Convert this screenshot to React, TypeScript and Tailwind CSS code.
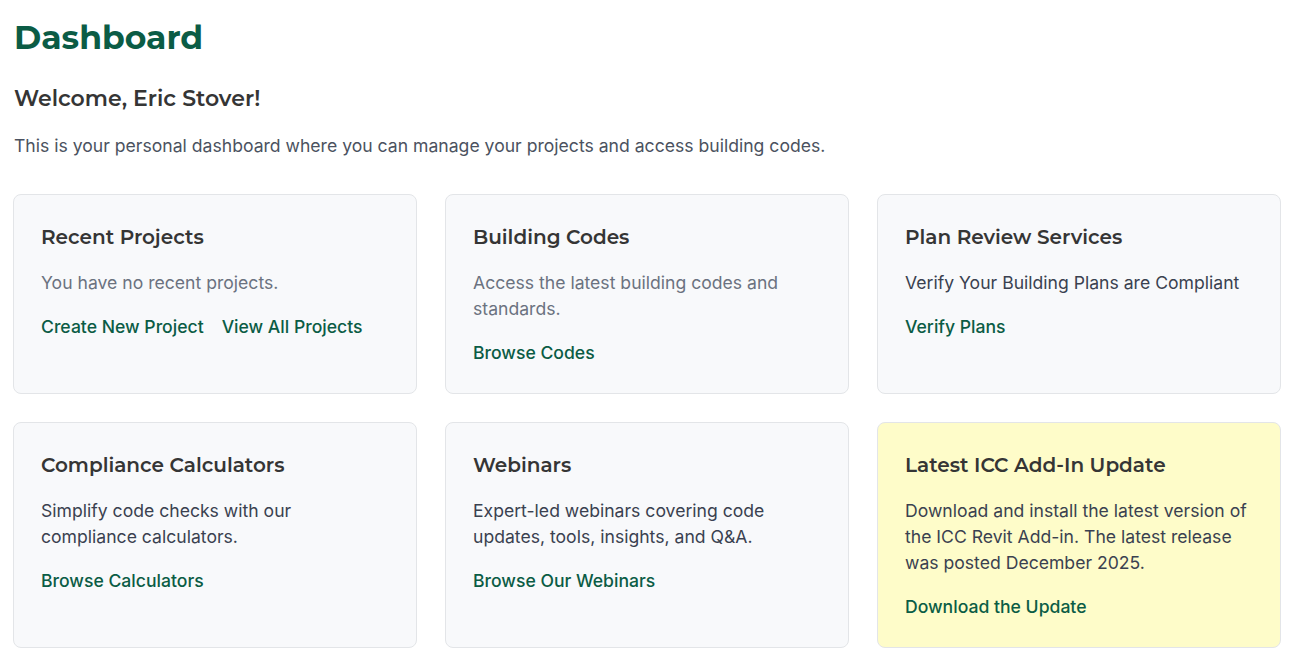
const heading = "font-['Montserrat','Noto_Sans',sans-serif]";

type Card = {
  title: string;
  body: string;
  muted?: boolean;
  links: string[];
  highlight?: boolean;
};

const cards: Card[] = [
  { title: 'Recent Projects', body: 'You have no recent projects.', muted: true, links: ['Create New Project', 'View All Projects'] },
  { title: 'Building Codes', body: 'Access the latest building codes and standards.', muted: true, links: ['Browse Codes'] },
  { title: 'Plan Review Services', body: 'Verify Your Building Plans are Compliant', links: ['Verify Plans'] },
  { title: 'Compliance Calculators', body: 'Simplify code checks with our compliance calculators.', links: ['Browse Calculators'] },
  { title: 'Webinars', body: 'Expert-led webinars covering code updates, tools, insights, and Q&A.', links: ['Browse Our Webinars'] },
  {
    title: 'Latest ICC Add-In Update',
    body: 'Download and install the latest version of the ICC Revit Add-in. The latest release was posted December 2025.',
    links: ['Download the Update'],
    highlight: true,
  },
];

function DashCard({ card }: { card: Card }) {
  return (
    <div
      className={`rounded-lg border border-[#e3e5e8] px-[27px] py-7 ${
        card.highlight ? 'bg-[#fefcc9]' : 'bg-[#f8f9fb]'
      }`}
    >
      <h3 className={`${heading} text-[20px] leading-7 font-semibold text-[#353535] mb-[19px]`}>
        {card.title}
      </h3>
      <p
        className={`text-[17.6px] leading-[26px] ${
          card.muted ? 'text-[#6b7280]' : 'text-[#3a4150]'
        }`}
      >
        {card.body}
      </p>
      <div className="mt-[19px] flex gap-[18px]">
        {card.links.map((l) => (
          <a key={l} href="#" className="text-[17.6px] leading-6 font-medium text-[#0b5c45]">
            {l}
          </a>
        ))}
      </div>
    </div>
  );
}

export default function App() {
  return (
    <div className="min-h-screen bg-white pl-[13px] pr-4 pt-[14px] pb-4 font-['Inter',sans-serif]">
      <h1 className={`${heading} text-[33px] leading-[46px] font-bold text-[#0b5c45] pl-px`}>
        Dashboard
      </h1>
      <h2 className={`${heading} mt-[25px] text-[22px] leading-7 font-semibold text-[#353535] pl-px`}>
        Welcome, Eric Stover!
      </h2>
      <p className="mt-5 text-[17.6px] leading-[26px] text-[#4b5260] pl-px">
        This is your personal dashboard where you can manage your projects and access building codes.
      </p>
      <div className="mt-[35px] grid grid-cols-3 gap-7">
        {cards.map((c) => (
          <DashCard key={c.title} card={c} />
        ))}
      </div>
    </div>
  );
}
